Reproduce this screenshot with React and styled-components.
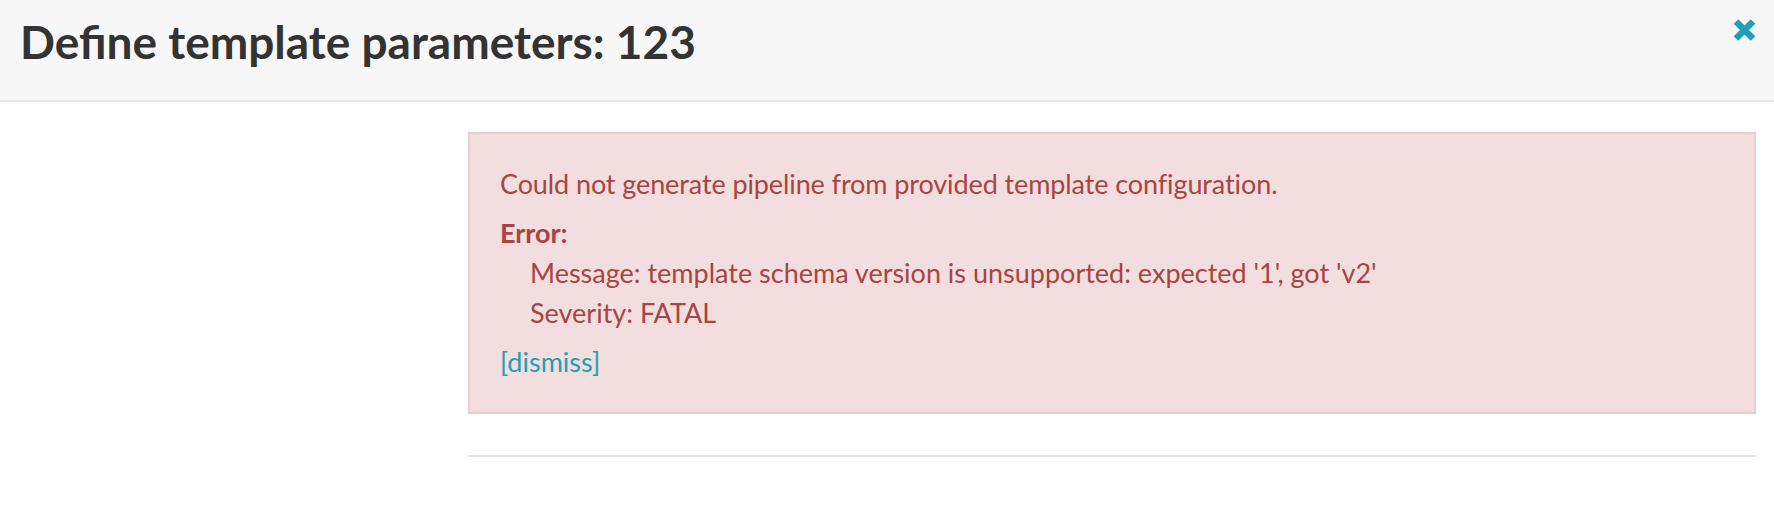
import styled, { createGlobalStyle } from "styled-components";

const GlobalStyle = createGlobalStyle`
  html, body {
    margin: 0;
    padding: 0;
    background: #ffffff;
    font-family: Lato, "Open Sans", sans-serif;
    color: #333333;
  }
`;

const Modal = styled.div`
  width: 100%;
  min-height: 512px;
  background: #ffffff;
`;

const Header = styled.div`
  display: flex;
  justify-content: space-between;
  align-items: flex-start;
  height: 100px;
  padding: 0 18px 0 20px;
  background: #f7f7f7;
  border-bottom: 2px solid #e5e5e5;
`;

const Title = styled.h3`
  margin: 18px 0 0;
  font-size: 46px;
  line-height: 48px;
  font-weight: 700;
  color: #333333;
`;

const CloseButton = styled.button`
  margin-top: 18px;
  padding: 0;
  border: 0;
  background: none;
  width: 23px;
  height: 24px;
  cursor: pointer;
  color: #229fb8;
  display: flex;
`;

const Body = styled.div`
  display: grid;
  grid-template-columns: 468px 1fr;
  padding: 30px 18px 0 0;
`;

const Sidebar = styled.div``;

const Main = styled.div`
  display: flex;
  flex-direction: column;
`;

const Alert = styled.div`
  padding: 30px;
  border: 2px solid #ebccd1;
  background: #f2dede;
  color: #a94442;
  font-size: 27px;
  line-height: 40px;
  margin-bottom: 41px;
`;

const Para = styled.p`
  margin: 0 0 9px;
  letter-spacing: -0.1px;
`;

const ErrorLabel = styled.div`
  font-weight: 700;
`;

const Details = styled.div`
  padding-left: 30px;
  margin-bottom: 9px;
`;

const DismissLink = styled.a`
  color: #229fb8;
  text-decoration: none;
  cursor: pointer;
`;

const Divider = styled.hr`
  margin: 0;
  border: 0;
  height: 2px;
  background: #e5e5e5;
`;

const CloseIcon = () => (
  <svg width="23" height="24" viewBox="0 0 23 24">
    <path
      d="M3 3.5 L20 20.5 M20 3.5 L3 20.5"
      stroke="currentColor"
      strokeWidth="6.5"
      fill="none"
    />
  </svg>
);

const App = () => {
  const error = {
    message: "template schema version is unsupported: expected '1', got 'v2'",
    severity: "FATAL",
  };
  return (
    <Modal>
      <GlobalStyle />
      <Header>
        <Title>Define template parameters: 123</Title>
        <CloseButton aria-label="close">
          <CloseIcon />
        </CloseButton>
      </Header>
      <Body>
        <Sidebar />
        <Main>
          <Alert>
            <Para>Could not generate pipeline from provided template configuration.</Para>
            <ErrorLabel>Error:</ErrorLabel>
            <Details>
              <div>Message: {error.message}</div>
              <div>Severity: {error.severity}</div>
            </Details>
            <DismissLink>[dismiss]</DismissLink>
          </Alert>
          <Divider />
        </Main>
      </Body>
    </Modal>
  );
};

export default App;
